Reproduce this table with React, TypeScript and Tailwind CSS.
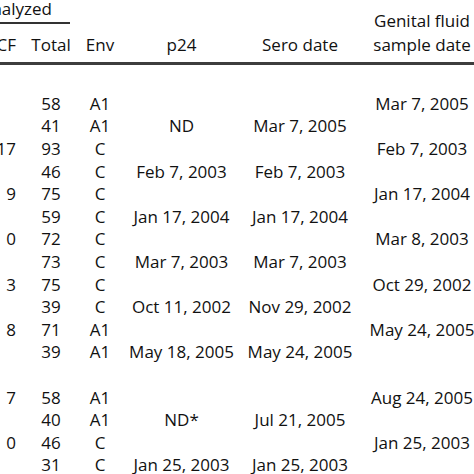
const rows: [string, string, string, string, string, string][] = [
  ["", "58", "A1", "", "", "Mar 7, 2005"],
  ["", "41", "A1", "ND", "Mar 7, 2005", ""],
  ["17", "93", "C", "", "", "Feb 7, 2003"],
  ["", "46", "C", "Feb 7, 2003", "Feb 7, 2003", ""],
  ["9", "75", "C", "", "", "Jan 17, 2004"],
  ["", "59", "C", "Jan 17, 2004", "Jan 17, 2004", ""],
  ["0", "72", "C", "", "", "Mar 8, 2003"],
  ["", "73", "C", "Mar 7, 2003", "Mar 7, 2003", ""],
  ["3", "75", "C", "", "", "Oct 29, 2002"],
  ["", "39", "C", "Oct 11, 2002", "Nov 29, 2002", ""],
  ["8", "71", "A1", "", "", "May 24, 2005"],
  ["", "39", "A1", "May 18, 2005", "May 24, 2005", ""],
  ["", "", "", "", "", ""],
  ["7", "58", "A1", "", "", "Aug 24, 2005"],
  ["", "40", "A1", "ND*", "Jul 21, 2005", ""],
  ["0", "46", "C", "", "", "Jan 25, 2003"],
  ["", "31", "C", "Jan 25, 2003", "Jan 25, 2003", ""],
];

function Row({ r }: { r: (typeof rows)[number] }) {
  return (
    <div className="flex h-[22.6px] leading-[22.6px] whitespace-nowrap">
      <div className="flex w-[24px] shrink-0 justify-end pr-[8px]">{r[0]}</div>
      <div className="w-[54px] shrink-0 text-center">{r[1]}</div>
      <div className="w-[44px] shrink-0 text-center">{r[2]}</div>
      <div className="w-[119px] shrink-0 text-center">{r[3]}</div>
      <div className="w-[118px] shrink-0 text-center">{r[4]}</div>
      <div className="w-[126px] shrink-0 text-center">{r[5]}</div>
    </div>
  );
}

export default function App() {
  return (
    <div className="w-[474px] h-[474px] overflow-hidden bg-white text-[#111] text-[17px] font-['Open_Sans','Noto_Sans',sans-serif]">
      <div className="flex w-[485px] items-end whitespace-nowrap leading-[24.4px] pb-[4.4px] border-b-[3px] border-[#3d3d3d]">
        <div className="flex w-[78px] shrink-0 flex-col">
          <div className="flex h-[24px] w-[70px] justify-end pr-[18px] leading-[17px] border-b-2 border-[#333]">
            Sequences analyzed
          </div>
          <div className="mt-[9px] flex">
            <div className="flex w-[24px] shrink-0 justify-end pr-[8px]">CF</div>
            <div className="w-[54px] shrink-0 text-center">Total</div>
          </div>
        </div>
        <div className="w-[44px] shrink-0 text-center">Env</div>
        <div className="w-[119px] shrink-0 text-center">p24</div>
        <div className="w-[118px] shrink-0 text-center">Sero date</div>
        <div className="w-[126px] shrink-0 text-center">
          Genital fluid
          <br />
          sample date
        </div>
      </div>
      <div className="w-[485px] pt-[28px]">
        {rows.map((r, i) => (
          <Row key={i} r={r} />
        ))}
      </div>
    </div>
  );
}
